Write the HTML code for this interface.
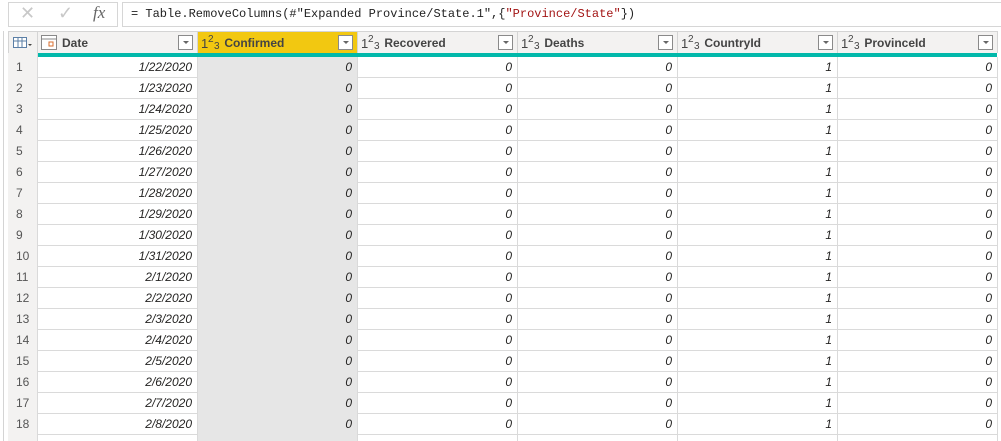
<!DOCTYPE html>
<html><head><style>
*{margin:0;padding:0;box-sizing:border-box}
html,body{width:1001px;height:441px;overflow:hidden}
body{background:#fff;font-family:"Segoe UI","Liberation Sans",sans-serif;position:relative;color:#252423}
.box{position:absolute;border:1px solid #d6d6d6;background:#fff}
.ic{position:absolute;color:#c8c8c8;font-size:18px}
.formula{position:absolute;left:131px;top:7px;font-family:"Liberation Mono",monospace;font-size:12px;color:#222}
.formula span{color:#a31515}
.hdr{position:absolute;top:31px;height:22px;background:#f3f2f1;border-top:1px solid #d4d4d4;border-right:1px solid #d4d4d4;font-size:12px;font-weight:bold;color:#444}
.hdr .t{position:absolute;top:4px;line-height:14px}
.dd{position:absolute;right:4px;top:3px;width:15px;height:15px;border:1px solid #8a8a8a;background:#fff}
.dd:after{content:"";position:absolute;left:4px;top:5px;border-left:3px solid transparent;border-right:3px solid transparent;border-top:3px solid #666}
.n{font-weight:normal;font-size:13px;color:#444;position:relative;display:inline-block;width:20px;height:14px;vertical-align:top}
.n b{position:absolute;font-weight:normal}
.teal{position:absolute;left:38px;top:53px;width:959px;height:4px;background:#01b8aa}
.row{position:absolute;left:8px;width:990px;height:21px;border-bottom:1px solid #dadada;font-size:12px;font-style:italic}
.c{position:absolute;top:0;height:21px;border-right:1px solid #dadada;text-align:right;padding-right:5px;line-height:20px}
.rn{position:absolute;left:0;width:30px;height:21px;background:#f3f2f1;border-right:1px solid #dadada;font-style:normal;color:#555;padding-left:8px;line-height:20px;font-size:12px}
</style></head><body>
<div class="box" style="left:8px;top:2px;width:110px;height:25px"></div>
<div class="ic" style="left:20px;top:3px">✕</div>
<div class="ic" style="left:58px;top:3px">✓</div>
<div style="position:absolute;left:93px;top:3px;font-family:'Liberation Serif',serif;font-style:italic;font-size:17px;color:#666">fx</div>
<div class="box" style="left:122px;top:2px;width:884px;height:25px"></div>
<div class="formula">= Table.RemoveColumns(#"Expanded Province/State.1",{<span>"Province/State"</span>})</div>
<div style="position:absolute;left:3px;top:31px;width:1px;height:410px;background:#d4d4d4"></div>
<div class="hdr" style="left:8px;width:30px;border-left:1px solid #d4d4d4">
<svg style="position:absolute;left:4px;top:5px" width="20" height="12"><rect x="0.5" y="0.5" width="13" height="10" fill="#fff" stroke="#5b7fa6"/><line x1="0" y1="4" x2="14" y2="4" stroke="#5b7fa6"/><line x1="5" y1="0" x2="5" y2="11" stroke="#5b7fa6"/><line x1="9" y1="0" x2="9" y2="11" stroke="#5b7fa6"/><path d="M15 7l2 2 2-2z" fill="#444"/></svg></div>
<div class="hdr" style="left:38px;width:160px">
<svg style="position:absolute;left:3px;top:3px" width="16" height="15"><rect x="0.5" y="0.5" width="15" height="14" fill="#fff" stroke="#888"/><line x1="0" y1="4" x2="16" y2="4" stroke="#888"/><rect x="8" y="7" width="4" height="4" fill="none" stroke="#d86e2c"/></svg>
<span class="t" style="left:24px">Date</span><div class="dd"></div></div>
<div id="hd"></div>
<div class="teal"></div>
<div style="position:absolute;left:8px;top:53px;width:30px;height:4px;background:#f3f2f1;border-right:1px solid #dadada"></div>
<div id="rows"></div>
<script>
var names=["Confirmed","Recovered","Deaths","CountryId","ProvinceId"],hh="";
for(var k=0;k<5;k++){hh+='<div class="hdr" style="left:'+(198+k*160)+'px;width:160px'+(k==0?';background:#f2c811':'')+'"><span class="t" style="left:3px"><span class="n"><b style="left:0;top:1px">1</b><b style="left:7px;top:-3px;font-size:10px">2</b><b style="left:13px;top:4px;font-size:10px">3</b></span> '+names[k]+'</span><div class="dd"></div></div>';}
document.getElementById("hd").innerHTML=hh;
var d=["1/22/2020","1/23/2020","1/24/2020","1/25/2020","1/26/2020","1/27/2020","1/28/2020","1/29/2020","1/30/2020","1/31/2020","2/1/2020","2/2/2020","2/3/2020","2/4/2020","2/5/2020","2/6/2020","2/7/2020","2/8/2020",""];
var h="";
for(var i=0;i<19;i++){var t=57+i*21;
h+='<div class="row" style="top:'+t+'px"><div class="rn">'+(i<18?i+1:"")+'</div>'+
'<div class="c" style="left:30px;width:160px">'+d[i]+'</div>'+
'<div class="c" style="left:190px;width:160px;background:#e6e6e6">'+(i<18?0:"")+'</div>'+
'<div class="c" style="left:350px;width:160px">'+(i<18?0:"")+'</div>'+
'<div class="c" style="left:510px;width:160px">'+(i<18?0:"")+'</div>'+
'<div class="c" style="left:670px;width:160px">'+(i<18?1:"")+'</div>'+
'<div class="c" style="left:830px;width:160px">'+(i<18?0:"")+'</div></div>';}
document.getElementById("rows").innerHTML=h;
</script>
</body></html>
